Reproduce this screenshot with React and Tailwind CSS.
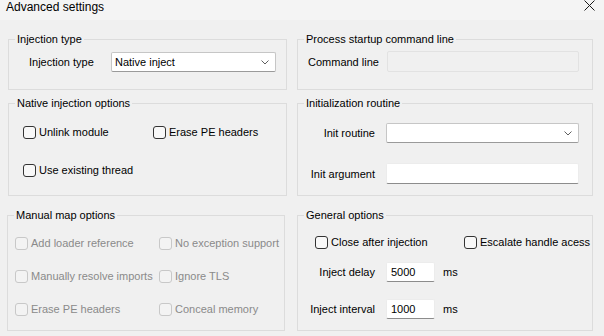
function Group({ title, className, children }) {
  return (
    <div className={`relative border border-[#dcdcdc] ${className}`}>
      <span className="absolute left-[6px] -top-[9px] bg-[#f0f0f0] px-[2px] leading-[16px] whitespace-nowrap">{title}</span>
      {children}
    </div>
  );
}

function Check({ label, disabled }) {
  return (
    <label className={`flex items-center h-[16px] gap-[3px] whitespace-nowrap ${disabled ? 'text-[#8a8a8a]' : ''}`}>
      <span
        className={`w-[13px] h-[13px] rounded-[3px] border shrink-0 ${
          disabled ? 'border-[#c8c8c8] bg-[#f3f3f3]' : 'border-[#333333] bg-[#f8f8f8]'
        }`}
      />
      {label}
    </label>
  );
}

function Chevron() {
  return (
    <svg width="8" height="5" viewBox="0 0 8 5" className="shrink-0">
      <path d="M0.5 0.5 L4 4 L7.5 0.5" fill="none" stroke="#5f5f5f" strokeWidth="1" />
    </svg>
  );
}

function Select({ value, className }) {
  return (
    <div className={`flex items-center justify-between h-[20px] bg-white border border-[#c6c6c6] border-b-[#9a9a9a] rounded-[2px] pl-[3px] pr-[6px] ${className}`}>
      <span>{value}</span>
      <Chevron />
    </div>
  );
}

function TextBox({ value, className }) {
  return (
    <div className={`flex items-center bg-white border border-[#ececec] border-b-[#8c8c8c] rounded-[2px] pl-[4px] ${className}`}>
      {value}
    </div>
  );
}

export default function App() {
  return (
    <div className="w-[604px] h-[336px] overflow-hidden bg-[#f0f0f0] text-[11px] leading-[16px] text-black whitespace-nowrap font-['Liberation_Sans',Arial,sans-serif]">
      <div className="flex items-start justify-between h-[20px] bg-[#f4f4f4] pl-[6px] pr-[9px]">
        <span className="text-[12px] leading-[14px]">Advanced settings</span>
        <svg width="11" height="11" viewBox="0 0 11 11">
          <path d="M0.5 0.5 L10.5 10.5 M10.5 0.5 L0.5 10.5" stroke="#1a1a1a" strokeWidth="1" />
        </svg>
      </div>

      <div className="flex gap-[10px] pl-[8px] pt-[19px]">
        {/* left column */}
        <div className="flex flex-col w-[279px]">
          <Group title="Injection type" className="h-[51px]">
            <div className="flex items-center pt-[12px] pl-[20px]">
              <span className="w-[82px]">Injection type</span>
              <Select value="Native inject" className="w-[165px]" />
            </div>
          </Group>

          <Group title="Native injection options" className="h-[93px] mt-[13px]">
            <div className="grid grid-cols-[130px_1fr] gap-y-[22px] pt-[20px] pl-[14px]">
              <Check label="Unlink module" />
              <Check label="Erase PE headers" />
              <Check label="Use existing thread" />
            </div>
          </Group>

          <Group title="Manual map options" className="h-[116px] mt-[19px] -ml-[1px] w-[278px]">
            <div className="grid grid-cols-[144px_1fr] gap-y-[17px] pt-[19px] pl-[7px]">
              <Check label="Add loader reference" disabled />
              <Check label="No exception support" disabled />
              <Check label="Manually resolve imports" disabled />
              <Check label="Ignore TLS" disabled />
              <Check label="Erase PE headers" disabled />
              <Check label="Conceal memory" disabled />
            </div>
          </Group>
        </div>

        {/* right column */}
        <div className="flex flex-col w-[296px]">
          <Group title="Process startup command line" className="h-[51px]">
            <div className="flex items-center pt-[11px] pl-[10px]">
              <span className="w-[79px]">Command line</span>
              <div className="w-[192px] h-[21px] border border-[#e2e2e2] rounded-[2px]" />
            </div>
          </Group>

          <Group title="Initialization routine" className="h-[93px] mt-[13px]">
            <div className="grid grid-cols-[77px_193px] gap-x-[11px] gap-y-[20px] items-center pt-[19px]">
              <span className="text-right">Init routine</span>
              <Select value="" />
              <span className="text-right">Init argument</span>
              <TextBox value="" className="h-[21px]" />
            </div>
          </Group>

          <Group title="General options" className="h-[116px] mt-[19px]">
            <div className="grid grid-cols-[149px_1fr] pt-[18px] pl-[17px]">
              <Check label="Close after injection" />
              <Check label="Escalate handle acess" />
            </div>
            <div className="grid grid-cols-[77px_49px_auto] gap-x-[11px] gap-y-[17px] items-center mt-[12px]">
              <span className="text-right">Inject delay</span>
              <TextBox value="5000" className="h-[20px]" />
              <span className="-ml-[3px]">ms</span>
              <span className="text-right">Inject interval</span>
              <TextBox value="1000" className="h-[20px]" />
              <span className="-ml-[3px]">ms</span>
            </div>
          </Group>
        </div>
      </div>
    </div>
  );
}
